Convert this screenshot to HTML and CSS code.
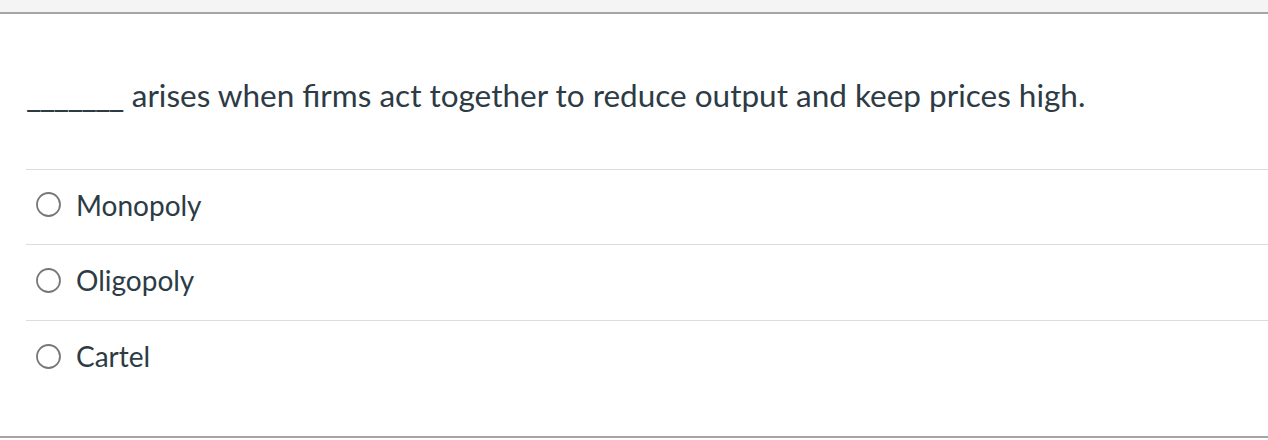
FILE: index.html
```html
<!DOCTYPE html>
<html lang="en">
<head>
<meta charset="utf-8">
<title>Quiz question</title>
<link rel="stylesheet" href="styles.css">
</head>
<body>
<div class="topbar"></div>
<div class="question">
  <div class="question-text"><span class="blank">_______</span> arises when firms act together to reduce output and keep prices high.</div>
  <div class="answers">
    <label class="answer"><svg class="radio" viewBox="0 0 25 25" width="25" height="25"><circle cx="12.5" cy="12.5" r="11.5" fill="none" stroke="#777777" stroke-width="1.8"/></svg><span class="answer-text">Monopoly</span></label>
    <label class="answer"><svg class="radio" viewBox="0 0 25 25" width="25" height="25"><circle cx="12.5" cy="12.5" r="11.5" fill="none" stroke="#777777" stroke-width="1.8"/></svg><span class="answer-text">Oligopoly</span></label>
    <label class="answer"><svg class="radio" viewBox="0 0 25 25" width="25" height="25"><circle cx="12.5" cy="12.5" r="11.5" fill="none" stroke="#777777" stroke-width="1.8"/></svg><span class="answer-text">Cartel</span></label>
  </div>
</div>
<div class="bottombar"></div>
</body>
</html>
```
FILE: styles.css
```css
html, body {
  margin: 0;
  padding: 0;
  background: #ffffff;
}
body {
  font-family: Lato, "Open Sans", sans-serif;
  color: #2d3b45;
}
.topbar {
  height: 12px;
  background: #f4f4f4;
  border-bottom: 2px solid #a5a5a5;
}
.question {
  padding-left: 26px;
  height: 422px;
  display: flex;
  flex-direction: column;
}
.question-text {
  font-size: 31.5px;
  line-height: 47px;
  height: 47px;
  padding-top: 58px;
  padding-bottom: 50px;
}
.blank {
  font-size: 34px;
  line-height: 0;
  letter-spacing: -1.8px;
  margin-right: 1px;
}
.answers {
  display: flex;
  flex-direction: column;
}
.answer {
  display: flex;
  align-items: center;
  height: 75px;
  border-top: 1px solid #dcdcdc;
  box-sizing: border-box;
  padding-left: 10px;
  padding-bottom: 5px;
}
.answer:nth-child(2),
.answer:nth-child(3) {
  height: 76px;
}
.radio {
  display: block;
  width: 25px;
  height: 25px;
  flex: none;
}
.answer-text {
  margin-left: 15px;
  font-size: 28px;
}
.bottombar {
  height: 2px;
  background: #a5a5a5;
}
```
